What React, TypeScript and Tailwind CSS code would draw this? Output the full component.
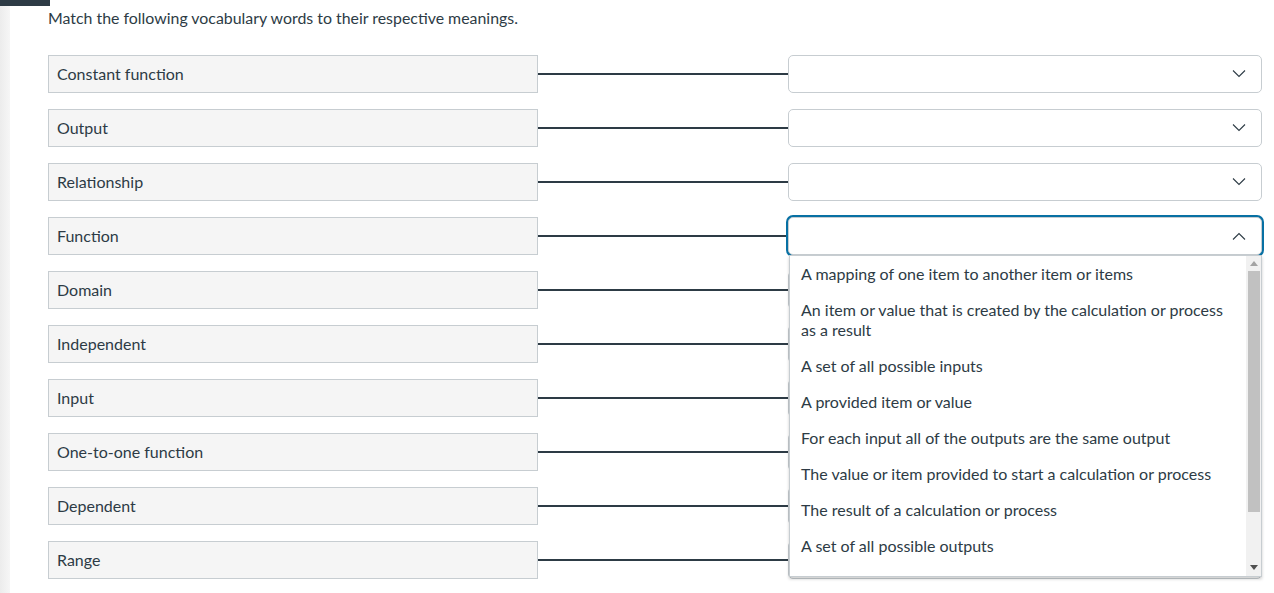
import React from 'react';

const WORDS = [
  'Constant function',
  'Output',
  'Relationship',
  'Function',
  'Domain',
  'Independent',
  'Input',
  'One-to-one function',
  'Dependent',
  'Range',
];

const OPTIONS = [
  'A mapping of one item to another item or items',
  'An item or value that is created by the calculation or process as a result',
  'A set of all possible inputs',
  'A provided item or value',
  'For each input all of the outputs are the same output',
  'The value or item provided to start a calculation or process',
  'The result of a calculation or process',
  'A set of all possible outputs',
];

const OPEN_INDEX = 3;

function Chevron({ up }: { up?: boolean }) {
  return (
    <svg width="14" height="8" viewBox="0 0 14 8" fill="none" className="text-[#2d3b45]">
      {up ? (
        <polyline points="1,7.5 7,1.5 13,7.5" stroke="currentColor" strokeWidth="1.1" />
      ) : (
        <polyline points="1,0.5 7,6.5 13,0.5" stroke="currentColor" strokeWidth="1.1" />
      )}
    </svg>
  );
}

function Scrollbar() {
  return (
    <div className="flex w-[15px] shrink-0 flex-col items-center bg-[#f1f1f1]">
      <svg width="8" height="5" viewBox="0 0 8 5" className="mt-[5px] shrink-0">
        <polygon points="0,5 4,0 8,5" fill="#a3a3a3" />
      </svg>
      <div className="mt-[5px] h-[241px] w-[12px] shrink-0 bg-[#c1c1c1]" />
      <div className="flex-1" />
      <svg width="8" height="5" viewBox="0 0 8 5" className="mb-[6px] shrink-0">
        <polygon points="0,0 8,0 4,5" fill="#505050" />
      </svg>
    </div>
  );
}

export default function App() {
  return (
    <div className="relative flex h-[593px] w-full overflow-hidden bg-white font-['Lato','Noto_Sans',sans-serif] text-[#2d3b45]">
      {/* top-left tab bar */}
      <div className="absolute left-0 top-0 z-10 h-[6px] w-[50px] bg-[#2d3b45]" />

      {/* left gutter */}
      <div className="w-[10px] shrink-0 bg-gradient-to-r from-[#ececec] to-[#f6f6f6]" />

      <main className="flex-1 pl-[38px] pr-[12px] pt-[8px]">
        <p className="text-[15.9px] leading-[20px]">
          Match the following vocabulary words to their respective meanings.
        </p>

        <div className="mt-[27px] flex flex-col gap-[16px]">
          {WORDS.map((word, i) => {
            const open = i === OPEN_INDEX;
            return (
              <div key={word} className="flex h-[38px] items-center">
                <div className="flex h-full w-[490px] shrink-0 items-center border border-[#c7cdd1] bg-[#f5f5f5] px-[8px] text-[16px]">
                  {word}
                </div>
                <div className="h-[2px] w-[250px] shrink-0 bg-[#2d3b45]" />
                <div className="relative h-full flex-1">
                  <div
                    className={`flex h-full items-center justify-end rounded-[5px] border border-[#c7cdd1] bg-white pr-[15px] ${
                      open ? 'ring-2 ring-[#0770a3]' : ''
                    }`}
                  >
                    <Chevron up={open} />
                  </div>
                  {open && (
                    <div className="absolute left-[1px] right-0 top-[38px] z-20 flex h-[322px] overflow-hidden border border-[#c7cdd1] bg-white shadow-[0_2px_3px_rgba(0,0,0,0.2)]">
                      <div className="flex-1">
                        {OPTIONS.map((opt) => (
                          <div key={opt} className="py-[8px] pl-[11px] pr-[10px] text-[16px] leading-[20px]">
                            {opt}
                          </div>
                        ))}
                      </div>
                      <Scrollbar />
                    </div>
                  )}
                </div>
              </div>
            );
          })}
        </div>
      </main>
    </div>
  );
}
